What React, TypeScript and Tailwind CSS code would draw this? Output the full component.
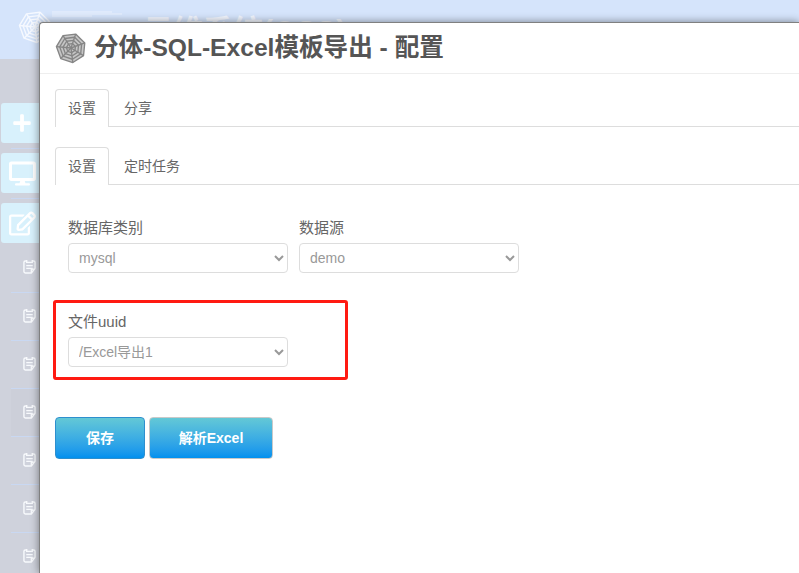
import { FaDesktop, FaPlus, FaRegEdit } from "react-icons/fa";

const cjk = "font-['Liberation_Sans','Noto_Sans_CJK_SC',sans-serif]";

function Web({ stroke, fill, className }: { stroke: string; fill?: string; className: string }) {
  const rings = [22, 17, 12, 7].map((r) =>
    Array.from({ length: 7 }, (_, i) => {
      const a = (i / 7) * Math.PI * 2 - 0.35;
      return `${24 + r * Math.cos(a)},${24 + r * Math.sin(a)}`;
    }).join(" ")
  );
  return (
    <svg viewBox="0 0 48 48" className={className} fill="none" stroke={stroke} strokeWidth="2">
      {rings.map((p) => (
        <polygon key={p} points={p} strokeLinejoin="round" fill={fill} />
      ))}
      {Array.from({ length: 7 }, (_, i) => {
        const a = (i / 7) * Math.PI * 2 - 0.35;
        return <line key={i} x1="24" y1="24" x2={24 + 22 * Math.cos(a)} y2={24 + 22 * Math.sin(a)} />;
      })}
    </svg>
  );
}

function Note() {
  return (
    <svg viewBox="0 0 14 16" className="w-[13px] h-[15px]" fill="none" stroke="#f8fafd" strokeWidth="1.500">
      <path d="M2.500 2h1.500M10 2h1.500Q13 2 13 3.500V10l-4 5H2.500Q1 15 1 13.500v-10Q1 2 2.500 2" />
      <path d="M4 1v2.500h6V1" />
      <path d="M3.500 7h7M3.500 10h7M9 15v-4h4" />
    </svg>
  );
}

function Tile({ children }: { children: React.ReactNode }) {
  return (
    <div className="h-10 ml-[1px] w-[42px] bg-[#d8f1fc] rounded-l-[3px] flex items-center justify-center text-white">
      {children}
    </div>
  );
}

function Divider() {
  return (
    <div className="h-[10px] ml-[11px] flex items-center">
      <div className="h-px w-[30px] bg-[#c9d8f2]" />
    </div>
  );
}

function Tabs({ labels }: { labels: string[] }) {
  return (
    <div className="flex h-[38px] border-b border-[#dddddd]">
      {labels.map((l, i) => (
        <div
          key={l}
          className={
            i === 0
              ? "h-[38px] px-3 pb-px flex items-center text-sm text-[#666] bg-white border border-b-0 border-[#dddddd] rounded-t-[4px]"
              : "h-[37px] px-[15px] flex items-center text-sm text-[#666]"
          }
        >
          {l}
        </div>
      ))}
    </div>
  );
}

function Field({ label, value }: { label: string; value: string }) {
  return (
    <div className="w-[220px]">
      <div className="text-[15px] leading-[20px] text-[#666] mb-[5px]">{label}</div>
      <select
        defaultValue={value}
        className={`w-[220px] h-[30px] pl-[6px] text-sm text-[#999] bg-white border border-[#dddddd] rounded-[4px] ${cjk}`}
      >
        <option>{value}</option>
      </select>
    </div>
  );
}

export default function App() {
  return (
    <div className={`relative w-[799px] h-[573px] overflow-hidden bg-[#cfd2dc] ${cjk}`}>
      <div className="relative h-[59px] bg-[#d5e4fb] flex items-start">
        <Web stroke="#f6f9ff" className="w-[34px] h-[34px] mt-[10px] ml-[18px]" />
        <svg viewBox="0 0 70 6" className="w-[70px] h-[6px] mt-[11px]" fill="none" stroke="#eaf1fd" strokeWidth="1">
          <path d="M0 1h60M0 3h70M0 5h40" />
        </svg>
        <div className="absolute left-[143px] top-[13px] text-[30px] leading-[36px] font-bold text-[#f2f6fe] whitespace-nowrap">
          云维系统(OSS)
        </div>
      </div>

      <div className="pt-[44px] w-10 flex flex-col">
        <Tile>
          <FaPlus className="w-5 h-5" />
        </Tile>
        <Divider />
        <Tile>
          <FaDesktop className="w-[27px] h-[27px]" />
        </Tile>
        <Divider />
        <Tile>
          <FaRegEdit className="w-[27px] h-[27px]" />
        </Tile>
        {[0, 1, 2, 3, 4, 5, 6].map((i) => (
          <div
            key={i}
            className={`${i === 0 ? "h-[50px]" : "h-[48px]"} ml-[11px] pb-[3px] flex items-center pl-3 ${i < 6 ? "border-b border-[#c9d8f2]" : ""} ${i === 3 ? "bg-[#cccfd9]" : ""}`}
          >
            <Note />
          </div>
        ))}
      </div>

      <div className="absolute left-[39px] top-[22px] w-[760px] h-[551px] bg-white rounded-tl-[4px] border-t border-l border-[#808080] shadow-[0_0_8px_rgba(0,0,0,0.45)]">
        <div className="h-[51px] border-b border-[#eeeeee] flex items-center pl-[15px] gap-[7px]">
          <Web stroke="#858585" fill="#c6c6c6" className="w-[32px] h-[32px]" />
          <h1 className="text-[24.6px] leading-[32px] font-bold text-[#555] whitespace-nowrap">
            分体-SQL-Excel模板导出 - 配置
          </h1>
        </div>

        <div className="pl-[15px] pt-[15px]">
          <Tabs labels={["设置", "分享"]} />
          <div className="mt-5">
            <Tabs labels={["设置", "定时任务"]} />
          </div>

          <div className="flex gap-[11px] pl-[13px] mt-[33px]">
            <Field label="数据库类别" value="mysql" />
            <Field label="数据源" value="demo" />
          </div>

          <div className="w-[295px] h-[80px] -ml-[2px] mt-[27px] border-[3px] border-[#ff1a12] rounded-[3px] pl-3 pt-[9px]">
            <Field label="文件uuid" value="/Excel导出1" />
          </div>

          <div className="flex gap-1 mt-[37px]">
            <button className="w-[90px] h-[42px] rounded-[4px] border border-[#2e8fce] bg-gradient-to-b from-[#63c8d6] to-[#0090ee] text-white text-sm font-bold">
              保存
            </button>
            <button className="w-[124px] h-[42px] rounded-[4px] border border-[#c9c9c9] bg-gradient-to-b from-[#63c8d6] to-[#0090ee] text-white text-sm font-bold">
              解析Excel
            </button>
          </div>
        </div>
      </div>
    </div>
  );
}
